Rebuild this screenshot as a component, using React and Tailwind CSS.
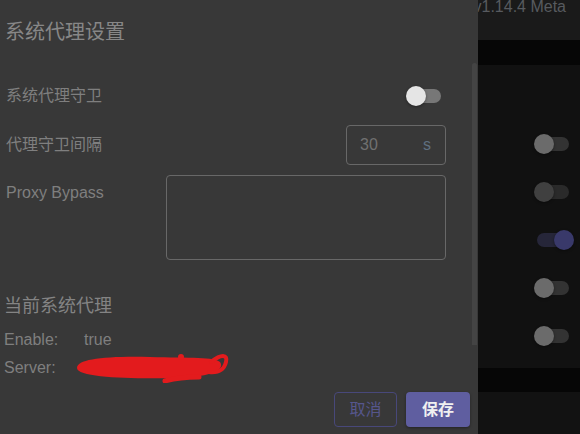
const FONT = "font-['Liberation_Sans','Noto_Sans_CJK_SC',sans-serif]"

function Switch({ on = false, knob, track, big = false }) {
  return (
    <div className="relative w-[38px] h-[20px] flex items-center">
      <div className={`mx-[3px] h-[14px] w-full rounded-full ${track}`} />
      <div
        className={`absolute top-0 w-[20px] h-[20px] rounded-full shadow-[0_1px_3px_rgba(0,0,0,0.4)] ${knob} ${
          on ? 'right-[-2px]' : 'left-0'
        } ${big ? '' : ''}`}
      />
    </div>
  )
}

function Scribble() {
  return (
    <svg width="154" height="30" viewBox="0 0 154 30" className="block">
      <path
        d="M2 15 C2 6 30 3 75 4 C115 5 140 4 145 9 C150 16 140 24 100 25 C60 26 2 25 2 15 Z"
        fill="#e31b1d"
      />
      <path d="M136 9 C146 1 153 1 151 9 C149 17 144 20 134 19" stroke="#e31b1d" strokeWidth="4" fill="none" strokeLinecap="round" />
      <path d="M90 28 C100 25 112 24 124 24" stroke="#e31b1d" strokeWidth="5" fill="none" strokeLinecap="round" />
      <circle cx="106" cy="4" r="3" fill="#e31b1d" />
    </svg>
  )
}

export default function App() {
  const rightToggles = [
    { knob: 'bg-[#6b6b6b]', track: 'bg-[#333333]' },
    { knob: 'bg-[#404040]', track: 'bg-[#2a2a2a]' },
    { knob: 'bg-[#39396a]', track: 'bg-[#262639]', on: true },
    { knob: 'bg-[#6b6b6b]', track: 'bg-[#333333]' },
    { knob: 'bg-[#6b6b6b]', track: 'bg-[#333333]' },
  ]

  return (
    <div className={`w-[580px] h-[434px] flex overflow-hidden ${FONT}`}>
      {/* 设置面板 */}
      <div className="w-[478px] h-full shrink-0 flex flex-col bg-[#383838]">
        <div className="h-[63px] pl-[5px] pt-[19px] text-[20px] leading-[26px] text-[#878787]">
          系统代理设置
        </div>

        <div className="flex-1 flex min-h-0">
          <div className="flex-1 pl-[4px] pr-[26px] text-[16px] text-[#7f7f7f]">
            <div className="mt-[13px] h-[40px] pl-[2px] flex items-center justify-between">
              <span className="leading-[24px]">系统代理守卫</span>
              <div className="mr-[2px]">
                <Switch knob="bg-[#e5e5e5]" track="bg-[#777777]" />
              </div>
            </div>

            <div className="mt-[9px] h-[40px] pl-[2px] flex items-center justify-between">
              <span className="leading-[24px]">代理守卫间隔</span>
              <div className="w-[100px] h-[40px] rounded-[4px] border border-[#686868] flex items-center justify-between pl-[13px] pr-[14px]">
                <span className="text-[#707070]">30</span>
                <span className="text-[#5f6f80]">s</span>
              </div>
            </div>

            <div className="mt-[10px] pl-[2px] flex justify-between">
              <span className="pt-[6px] leading-[24px]">Proxy Bypass</span>
              <div className="w-[280px] h-[85px] rounded-[4px] border border-[#686868]" />
            </div>

            <div className="mt-[34px] text-[18px] leading-[24px] text-[#848484]">当前系统代理</div>

            <div className="mt-[8px]">
              <div className="h-[28px] flex items-center">
                <span className="w-[80px]">Enable:</span>
                <span>true</span>
              </div>
              <div className="h-[28px] flex items-center">
                <span className="w-[71px]">Server:</span>
                <Scribble />
              </div>
            </div>
          </div>

          <div className="w-[5px] mr-[1px]">
            <div className="h-[282px] rounded-t-[3px] bg-[#444444]" />
          </div>
        </div>

        <div className="h-[42px] flex justify-end gap-[9px] pr-[8px]">
          <button className="w-[63px] h-[35px] rounded-[4px] border border-[#48487a] text-[16px] text-[#56568c]">
            取消
          </button>
          <button className="w-[64px] h-[35px] rounded-[4px] bg-[#5f5ea0] text-[16px] font-bold text-[#f0f0f0] shadow-[0_1px_3px_rgba(0,0,0,0.4)]">
            保存
          </button>
        </div>
      </div>

      {/* 背景主界面 */}
      <div className="flex-1 min-w-0 h-full flex flex-col bg-[#111111] overflow-hidden">
        <div className="h-[40px] bg-[#1a1a1a] flex justify-end pr-[14px]">
          <span className="-mt-px whitespace-nowrap text-[16px] leading-[16px] text-[#575a5f]">v1.14.4 Meta</span>
        </div>
        <div className="h-[25px] bg-[#060606]" />
        <div className="flex-1 flex flex-col items-end pr-[8px] pt-[55px]">
          {rightToggles.map((t, i) => (
            <div key={i} className="h-[48px] flex items-center">
              <Switch on={t.on} knob={t.knob} track={t.track} />
            </div>
          ))}
        </div>
        <div className="h-[24px] bg-[#060606]" />
        <div className="h-[42px] bg-[#121212]" />
      </div>
    </div>
  )
}
